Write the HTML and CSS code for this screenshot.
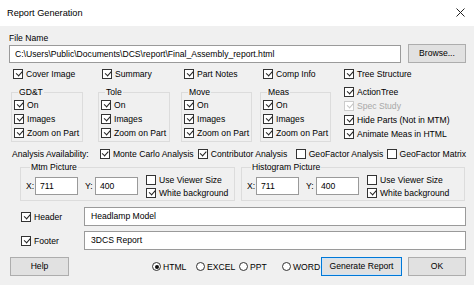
FILE: index.html
```html
<!DOCTYPE html>
<html lang="en">
<head>
  <meta charset="UTF-8">
  <title>Report Generation</title>
  <link rel="stylesheet" href="styles.css">
</head>
<body>

<div class="win">
  <div class="titlebar">
    <span class="title">Report Generation</span>
    <svg class="close" width="9" height="9" viewBox="0 0 9 9">
      <path d="M0.5 0.5L8.5 8.5M8.5 0.5L0.5 8.5" stroke="#222" stroke-width="1" fill="none"/>
    </svg>
  </div>

  <div class="content">
    <div class="caption">File Name</div>
    <div class="file-row">
      <div class="textbox path">C:\Users\Public\Documents\DCS\report\Final_Assembly_report.html</div>
      <div class="btn browse">Browse...</div>
    </div>

    <!-- sections to include -->
    <div class="opt-row">
      <span class="chk c1"><i class="box on"></i>Cover Image</span>
      <span class="chk c2"><i class="box on"></i>Summary</span>
      <span class="chk c3"><i class="box on"></i>Part Notes</span>
      <span class="chk c4"><i class="box on"></i>Comp Info</span>
      <span class="chk"><i class="box on"></i>Tree Structure</span>
    </div>

    <div class="groups">
      <fieldset class="grp gdt">
        <legend>GD&amp;T</legend>
        <span class="chk"><i class="box on"></i>On</span>
        <span class="chk"><i class="box on"></i>Images</span>
        <span class="chk"><i class="box on"></i>Zoom on Part</span>
      </fieldset>
      <fieldset class="grp tole">
        <legend>Tole</legend>
        <span class="chk"><i class="box on"></i>On</span>
        <span class="chk"><i class="box on"></i>Images</span>
        <span class="chk"><i class="box on"></i>Zoom on Part</span>
      </fieldset>
      <fieldset class="grp move">
        <legend>Move</legend>
        <span class="chk"><i class="box on"></i>On</span>
        <span class="chk"><i class="box on"></i>Images</span>
        <span class="chk"><i class="box on"></i>Zoom on Part</span>
      </fieldset>
      <fieldset class="grp meas">
        <legend>Meas</legend>
        <span class="chk"><i class="box on"></i>On</span>
        <span class="chk"><i class="box on"></i>Images</span>
        <span class="chk"><i class="box on"></i>Zoom on Part</span>
      </fieldset>
      <div class="side-list">
        <span class="chk"><i class="box on"></i>ActionTree</span>
        <span class="chk disabled"><i class="box on"></i>Spec Study</span>
        <span class="chk"><i class="box on"></i>Hide Parts (Not in MTM)</span>
        <span class="chk"><i class="box on"></i>Animate Meas in HTML</span>
      </div>
    </div>

    <div class="analysis-row">
      <span class="analysis-label">Analysis Availability:</span>
      <span class="chk a1"><i class="box on"></i>Monte Carlo Analysis</span>
      <span class="chk a2"><i class="box on"></i>Contributor Analysis</span>
      <span class="chk a3"><i class="box"></i>GeoFactor Analysis</span>
      <span class="chk"><i class="box"></i>GeoFactor Matrix</span>
    </div>

    <div class="pics">
      <fieldset class="grp pic mtm">
        <legend>Mtm Picture</legend>
        <div class="pic-body">
          <span class="axis">X:</span>
          <div class="textbox num">711</div>
          <span class="axis y">Y:</span>
          <div class="textbox num">400</div>
          <div class="pic-opts">
            <span class="chk"><i class="box"></i>Use Viewer Size</span>
            <span class="chk"><i class="box on"></i>White background</span>
          </div>
        </div>
      </fieldset>
      <fieldset class="grp pic hist">
        <legend>Histogram Picture</legend>
        <div class="pic-body">
          <span class="axis">X:</span>
          <div class="textbox num">711</div>
          <span class="axis y">Y:</span>
          <div class="textbox num">400</div>
          <div class="pic-opts">
            <span class="chk"><i class="box"></i>Use Viewer Size</span>
            <span class="chk"><i class="box on"></i>White background</span>
          </div>
        </div>
      </fieldset>
    </div>

    <div class="line-row header-row">
      <span class="chk line-chk"><i class="box on"></i>Header</span>
      <div class="textbox line-text">Headlamp Model</div>
    </div>
    <div class="line-row footer-row">
      <span class="chk line-chk"><i class="box on"></i>Footer</span>
      <div class="textbox line-text">3DCS Report</div>
    </div>

    <div class="bottom-row">
      <div class="btn help">Help</div>
      <span class="radio r1"><i class="dot on"></i>HTML</span>
      <span class="radio r2"><i class="dot"></i>EXCEL</span>
      <span class="radio r3"><i class="dot"></i>PPT</span>
      <span class="radio r4"><i class="dot"></i>WORD</span>
      <div class="btn generate">Generate Report</div>
      <div class="btn ok">OK</div>
    </div>
  </div>
</div>

</body>
</html>
```

FILE: styles.css
```css
* {
  box-sizing: border-box;
}
body {
  margin: 0;
  font-family: "Liberation Sans", Arial, sans-serif;
  font-size: 8.6px;
  color: #000;
  background: #f0f0f0;
}
.win {
  width: 474px;
  height: 285px;
  overflow: hidden;
  background: #f0f0f0;
}
.titlebar {
  height: 26px;
  background: #fff;
  display: flex;
  align-items: center;
  justify-content: space-between;
  padding: 0 9px 1px 7px;
}
.title {
  font-size: 9.2px;
}
.content {
  padding: 0 8px 0 9px;
}
.caption {
  margin-top: 6px;
  line-height: 12px;
}
.file-row {
  display: flex;
  align-items: center;
  height: 19px;
}
.textbox {
  background: #fff;
  border: 1px solid #9a9a9a;
  height: 18px;
  line-height: 16px;
  padding-left: 5px;
  white-space: nowrap;
  overflow: hidden;
}
.path {
  width: 392px;
}
.btn {
  background: #e1e1e1;
  border: 1px solid #adadad;
  height: 19px;
  line-height: 17px;
  text-align: center;
}
.browse {
  width: 58px;
  margin-left: 7px;
}

/* checkboxes */
.chk {
  display: flex;
  align-items: center;
  height: 14px;
  white-space: nowrap;
}
.box {
  position: relative;
  width: 10px;
  height: 10px;
  border: 1px solid #333;
  background: #fff;
  margin-right: 3px;
  flex: none;
}
.box.on::after {
  content: "";
  position: absolute;
  left: 1.5px;
  top: 1px;
  width: 5px;
  height: 2.5px;
  border-left: 1px solid #222;
  border-bottom: 1px solid #222;
  transform: rotate(-48deg);
}
.disabled {
  color: #a8a8a8;
}
.disabled .box {
  border-color: #cccccc;
}
.disabled .box.on::after {
  border-color: #c4c4c4;
}

.opt-row {
  display: flex;
  margin-top: 4px;
  margin-left: 4px;
}
.c1 { width: 89px; }
.c2 { width: 82px; }
.c3 { width: 79px; }
.c4 { width: 81px; }

/* group boxes */
.groups {
  display: flex;
  align-items: flex-start;
  margin-top: 5px;
}
.grp {
  margin: 0;
  padding: 0 0 1px 2px;
  border: 1px solid #dcdcdc;
  min-width: 0;
}
.grp legend {
  padding: 0 1px;
  margin-left: 4px;
  line-height: 12px;
}
.gdt { margin-left: 2px; width: 72px; }
.tole { margin-left: 15px; width: 72px; }
.move { margin-left: 11px; width: 71px; }
.meas { margin-left: 8px; width: 71px; }
.side-list {
  margin-left: 13px;
  margin-top: -1px;
}

.analysis-row {
  display: flex;
  margin-top: 5px;
  margin-left: 3px;
  height: 14px;
  align-items: center;
}
.analysis-label { width: 88px; }
.a1 { width: 98px; }
.a2 { width: 98px; }
.a3 { width: 91px; }

/* picture size groups */
.pics {
  display: flex;
}
.pic {
  padding: 0 0 1px 5px;
}
.mtm { margin-left: 11px; width: 215px; }
.hist { margin-left: 6px; width: 224px; }
.pic-body {
  display: flex;
  align-items: center;
  height: 26px;
}
.axis { width: 9px; }
.axis.y { margin-left: 7px; width: 10px; }
.num {
  width: 43px;
  padding-left: 4px;
}
.pic-opts {
  margin-left: 8px;
}
.pic-opts .chk {
  height: 13px;
}

/* header / footer */
.line-row {
  display: flex;
  align-items: center;
  height: 19px;
}
.header-row { margin-top: 6px; }
.footer-row { margin-top: 5px; }
.line-chk {
  margin-left: 12px;
  width: 63px;
}
.line-text {
  flex: 1;
  height: 19px;
  line-height: 17px;
  padding-left: 6px;
}

/* bottom buttons */
.bottom-row {
  display: flex;
  align-items: center;
  margin-top: 7px;
  height: 19px;
}
.help {
  margin-left: 1px;
  width: 59px;
}
.radio {
  display: flex;
  align-items: center;
}
.dot {
  position: relative;
  width: 9px;
  height: 9px;
  border: 1px solid #333;
  border-radius: 50%;
  background: #fff;
  margin-right: 2px;
}
.dot.on::after {
  content: "";
  position: absolute;
  left: 1.5px;
  top: 1.5px;
  width: 4px;
  height: 4px;
  border-radius: 50%;
  background: #111;
}
.r1 { margin-left: 83px; width: 44px; }
.r2 { width: 43px; }
.r3 { width: 43px; }
.r4 { width: 39px; }
.generate {
  width: 81px;
  border-color: #0078d7;
  box-shadow: inset 0 0 0 1px #cfe3f5;
}
.ok {
  margin-left: 6px;
  width: 58px;
}
```
